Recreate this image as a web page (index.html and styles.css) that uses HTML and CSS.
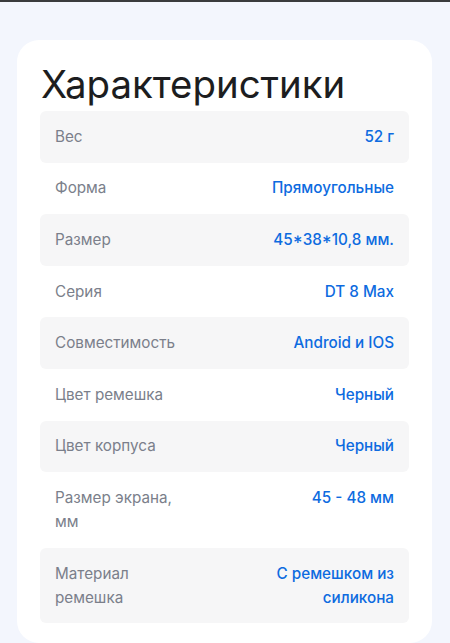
FILE: index.html
```html
<!DOCTYPE html>
<html lang="ru">
<head>
<meta charset="utf-8">
<link rel="stylesheet" href="styles.css">
</head>
<body>
<div class="topline"></div>
<section class="card">
  <h1 class="title">Характеристики</h1>
  <div class="specs">
    <div class="row"><span class="label">Вес</span><span class="value">52 г</span></div>
    <div class="row"><span class="label">Форма</span><span class="value">Прямоугольные</span></div>
    <div class="row"><span class="label">Размер</span><span class="value">45*38*10,8 мм.</span></div>
    <div class="row"><span class="label">Серия</span><span class="value">DT 8 Max</span></div>
    <div class="row"><span class="label">Совместимость</span><span class="value">Android и IOS</span></div>
    <div class="row"><span class="label">Цвет ремешка</span><span class="value">Черный</span></div>
    <div class="row"><span class="label">Цвет корпуса</span><span class="value">Черный</span></div>
    <div class="row"><span class="label">Размер экрана, мм</span><span class="value">45 - 48 мм</span></div>
    <div class="row"><span class="label">Материал ремешка</span><span class="value">С ремешком из силикона</span></div>
  </div>
</section>
</body>
</html>
```
FILE: styles.css
```css
html, body {
  margin: 0;
  padding: 0;
}
body {
  background: #f3f6fd;
  font-family: Inter, "Noto Sans", sans-serif;
  height: 643px;
  overflow: hidden;
}
.topline {
  height: 2px;
  background: #3a3b3d;
}
.card {
  margin: 38px 18px 0 17px;
  background: #ffffff;
  border-radius: 22px;
  padding: 18px 23px 20px 23px;
}
.title {
  margin: 0 0 0 1px;
  font-size: 38.4px;
  font-weight: 400;
  line-height: 53px;
  color: #1c1d20;
}
.specs {
  display: flex;
  flex-direction: column;
}
.row {
  display: flex;
  justify-content: space-between;
  gap: 24px;
  padding: 13.8px 15px;
  font-size: 15.25px;
  line-height: 24px;
  border-radius: 6px;
}
.row:nth-child(odd) {
  background: #f6f6f7;
}
.label {
  color: #7b7f8b;
  max-width: 130px;
}
.value {
  color: #0d6be0;
  font-weight: 500;
  text-align: right;
  max-width: 140px;
}
```
